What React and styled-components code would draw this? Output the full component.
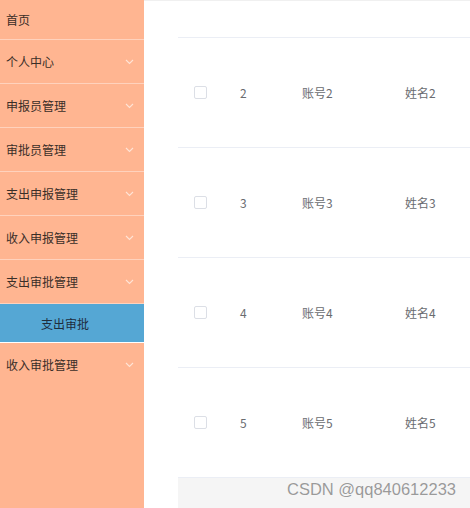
import React from "react";
import styled, { createGlobalStyle } from "styled-components";

const Global = createGlobalStyle`
  html, body { margin: 0; padding: 0; }
  body { font-family: "Microsoft YaHei", "Noto Sans CJK SC", "Liberation Sans", sans-serif; }
  * { box-sizing: border-box; }
`;

const Page = styled.div`
  position: relative;
  display: flex;
  width: 470px;
  height: 508px;
  overflow: hidden;
  background: #fff;
`;

const Sidebar = styled.nav`
  width: 144px;
  flex: none;
  background: #ffb591;
  display: flex;
  flex-direction: column;
`;

const MenuItem = styled.div`
  height: ${(p) => p.$h}px;
  flex: none;
  display: flex;
  align-items: center;
  justify-content: space-between;
  padding: 0 10px 0 ${(p) => (p.$sub ? 41 : 6)}px;
  font-size: 12px;
  color: ${(p) => (p.$active ? "#1f2d3d" : "#3a2e28")};
  background: ${(p) => (p.$active ? "#55a7d4" : "transparent")};
  border-bottom: ${(p) => (p.$last ? "none" : `1px solid ${p.$sep}`)};
`;

const Chevron = () => (
  <svg width="9" height="6" viewBox="0 0 9 6" fill="none">
    <polyline points="1,1 4.5,4.5 8,1" stroke="#ffe4d6" strokeWidth="1.1" />
  </svg>
);

const Main = styled.main`
  flex: 1;
  border-top: 1px solid #f0f0f0;
  padding-left: 34px;
  display: flex;
  flex-direction: column;
`;

const Row = styled.div`
  height: ${(p) => p.$h}px;
  flex: none;
  display: grid;
  grid-template-columns: 52px 62px 103px 1fr;
  align-items: center;
  border-bottom: 1px solid #ebeef5;
  font-size: 12px;
  color: #6a6c70;
`;

const Cell = styled.div`
  padding-left: ${(p) => (p.$check ? 16 : 10)}px;
  white-space: nowrap;
`;

const Check = styled.span`
  display: block;
  width: 13px;
  height: 13px;
  border: 1px solid #dcdfe6;
  border-radius: 2px;
  background: #fff;
`;

const Footer = styled.div`
  flex: 1;
  background: #f5f5f5;
`;

const Watermark = styled.div`
  position: absolute;
  right: 14px;
  bottom: 9px;
  font-family: "Liberation Sans", Arial, sans-serif;
  font-size: 16.5px;
  color: #9a9a9a;
  text-shadow: 0 0 1px #fff;
`;

const menus = [
  { label: "首页", h: 40, arrow: false },
  { label: "个人中心", h: 44, arrow: true },
  { label: "申报员管理", h: 44, arrow: true },
  { label: "审批员管理", h: 44, arrow: true },
  { label: "支出申报管理", h: 44, arrow: true },
  { label: "收入申报管理", h: 44, arrow: true },
  { label: "支出审批管理", h: 44, arrow: true },
  { label: "支出审批", h: 39, sub: true, active: true },
  { label: "收入审批管理", h: 43, arrow: true, last: true },
];

const rows = [2, 3, 4, 5];

export default function App() {
  return (
    <>
      <Global />
      <Page>
        <Sidebar>
          {menus.map((m) => (
            <MenuItem
              key={m.label}
              $h={m.h}
              $sub={m.sub}
              $active={m.active}
              $last={m.last}
              $sep={m.active ? "#ffffff" : "#ffd2bd"}
            >
              <span>{m.label}</span>
              {m.arrow && <Chevron />}
            </MenuItem>
          ))}
        </Sidebar>
        <Main>
          <Row $h={37} />
          {rows.map((n) => (
            <Row key={n} $h={110}>
              <Cell $check>
                <Check />
              </Cell>
              <Cell>{n}</Cell>
              <Cell>账号{n}</Cell>
              <Cell>姓名{n}</Cell>
            </Row>
          ))}
          <Footer />
        </Main>
        <Watermark>CSDN @qq840612233</Watermark>
      </Page>
    </>
  );
}
